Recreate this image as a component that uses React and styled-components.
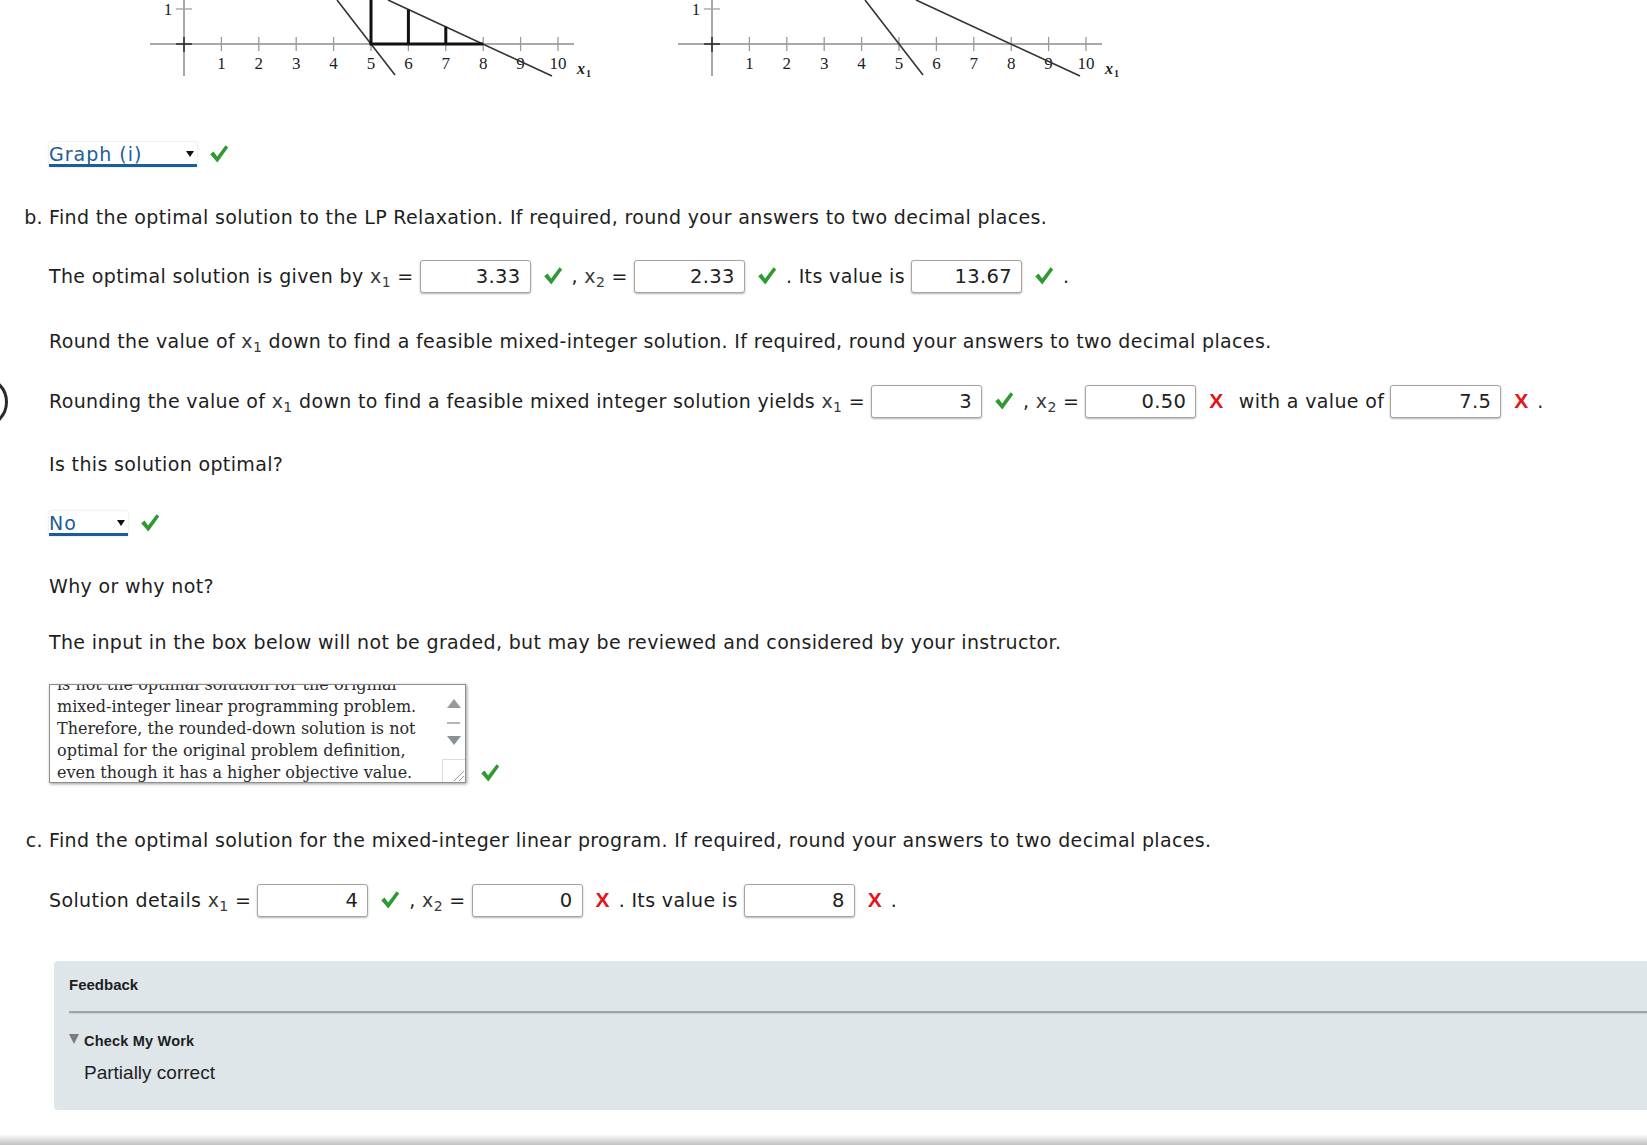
import React from "react";
import styled, { createGlobalStyle } from "styled-components";

const GlobalStyle = createGlobalStyle`
  html, body { margin: 0; padding: 0; background: #fff; overflow: hidden; }
  body {
    font-family: "DejaVu Sans", Verdana, sans-serif;
    font-size: 19px;
    letter-spacing: 0.35px;
    color: #1e1e1e;
  }
`;

const Page = styled.div`
  position: relative;
  width: 1647px;
  height: 1145px;
  overflow: hidden;
`;

const GraphStrip = styled.div`
  display: flex;
  gap: 68px;
  padding-left: 140px;
  height: 90px;
`;

const GraphSvg = styled.svg`
  display: block;
  width: 460px;
  height: 90px;
  letter-spacing: 0;
  font-family: "Liberation Serif", "Times New Roman", serif;
`;

const Row = styled.div`
  position: relative;
  display: flex;
  align-items: center;
  height: 34px;
  white-space: nowrap;
  padding-left: ${(p) => (p.$indent ?? 49)}px;
  margin-top: ${(p) => p.$mt}px;
`;

const QLabel = styled.span`
  box-sizing: border-box;
  display: inline-block;
  width: 49px;
  padding-right: 6px;
  text-align: right;
`;

const Field = styled.span`
  display: inline-flex;
  align-items: center;
  justify-content: flex-end;
  box-sizing: border-box;
  width: 111px;
  height: 33px;
  margin-left: 6px;
  padding-right: 9px;
  background: #fff;
  border: 1px solid #a5a5a5;
  border-radius: 3px;
  box-shadow: 0 1px 2px rgba(0, 0, 0, 0.3);
  font-size: 19.5px;
  color: #222;
`;

const CheckSvg = styled.svg`
  flex-shrink: 0;
  width: 20px;
  height: 20px;
  margin: 0 9px 0 12px;
`;

const Cross = styled.span`
  font-family: "Liberation Sans", Arial, sans-serif;
  font-weight: bold;
  font-size: 21px;
  color: #e5141c;
  letter-spacing: 0;
  margin: 0 9px 0 13px;
`;

const Var = styled.span`
  color: #3a3a3a;
  & > sub {
    font-size: 14px;
    vertical-align: -4px;
    line-height: 0;
  }
`;

const Select = styled.span`
  display: inline-flex;
  align-items: center;
  justify-content: space-between;
  box-sizing: border-box;
  width: ${(p) => p.$w}px;
  height: 25px;
  line-height: 19px;
  padding: 3px 3px 0 0;
  color: #1d5c9c;
  letter-spacing: 1px;
  background: #fff;
  border-bottom: 3px solid #1d5c9c;
  border-radius: 2px 2px 0 0;
  box-shadow: 0 0 2px rgba(0, 0, 0, 0.22);
`;

const Arrow = styled.span`
  width: 0;
  height: 0;
  border-left: 4.5px solid transparent;
  border-right: 4.5px solid transparent;
  border-top: 6px solid #111;
`;

const Ring = styled.span`
  position: absolute;
  left: -44px;
  top: 50%;
  margin-top: -25px;
  box-sizing: border-box;
  width: 52px;
  height: 52px;
  border: 3px solid #2a2a2a;
  border-radius: 50%;
`;

const TextRow = styled.div`
  display: flex;
  align-items: flex-end;
  padding-left: 49px;
  margin-top: 25px;
`;

const TextBox = styled.div`
  display: flex;
  box-sizing: border-box;
  width: 417px;
  height: 99px;
  border: 1px solid #8d8d8d;
  box-shadow: 1px 1px 3px rgba(0, 0, 0, 0.4);
  background: #fff;
  overflow: hidden;
`;

const TextContent = styled.div`
  flex: 1;
  padding-left: 7px;
  overflow: hidden;
  font-family: "DejaVu Serif", "Liberation Serif", serif;
  font-size: 16px;
  line-height: 22px;
  letter-spacing: 0;
  color: #2a2a2a;
`;

const TextLine = styled.div`
  white-space: nowrap;
  &:first-child {
    margin-top: -11px;
  }
`;

const ScrollBar = styled.div`
  width: 23px;
  flex-shrink: 0;
  display: flex;
  flex-direction: column;
  align-items: center;
  padding-top: 14px;
`;

const TriUp = styled.span`
  width: 0;
  height: 0;
  border-left: 7px solid transparent;
  border-right: 7px solid transparent;
  border-bottom: 9px solid #9a9a9a;
`;

const TriDown = styled.span`
  width: 0;
  height: 0;
  margin-top: 12px;
  border-left: 7px solid transparent;
  border-right: 7px solid transparent;
  border-top: 9px solid #8b8f96;
`;

const Dash = styled.span`
  width: 13px;
  height: 2px;
  margin-top: 14px;
  background: #b4b4b4;
`;

const Resizer = styled.div`
  margin-top: auto;
  box-sizing: border-box;
  width: 23px;
  height: 23px;
  border-left: 1px solid #dcdcdc;
  border-top: 1px solid #dcdcdc;
  display: flex;
  align-items: flex-end;
  justify-content: flex-end;
`;

const TextCheck = styled.span`
  display: flex;
  margin-left: 2px;
`;

const FeedbackBox = styled.div`
  margin: 44px -30px 0 54px;
  padding: 14px 0 25px 15px;
  background: #dfe6ea;
  border-radius: 4px 0 0 4px;
  font-family: "Liberation Sans", Arial, sans-serif;
  letter-spacing: 0;
  color: #1e1e1e;
`;

const FeedbackTitle = styled.div`
  font-size: 15px;
  font-weight: bold;
  line-height: 20px;
`;

const Divider = styled.div`
  margin-top: 16px;
  height: 2px;
  background: #9ea6aa;
  border-bottom: 1px solid #cdd4d7;
`;

const Toggle = styled.div`
  display: flex;
  align-items: center;
  gap: 5px;
  margin-top: 17px;
  font-size: 14.5px;
  font-weight: bold;
  letter-spacing: 0.2px;
  line-height: 20px;
`;

const ToggleTri = styled.span`
  width: 0;
  height: 0;
  margin-top: -4px;
  border-left: 5px solid transparent;
  border-right: 5px solid transparent;
  border-top: 10px solid #7c7c7c;
`;

const Status = styled.div`
  margin-top: 10px;
  padding-left: 15px;
  font-size: 19px;
  line-height: 24px;
`;

const BottomBar = styled.div`
  margin-top: 24px;
  height: 12px;
  background: linear-gradient(to bottom, #ffffff, #bcbcbc);
`;

const U = 37.4;

function Graph({ bold }) {
  const ticks = Array.from({ length: 10 }, (_, i) => i + 1);
  const xAt = (k) => 44 + U * k;
  return (
    <GraphSvg viewBox="0 0 460 90">
      <line x1="10" y1="44" x2="434" y2="44" stroke="#8c8c8c" strokeWidth="1.5" />
      <line x1="44" y1="0" x2="44" y2="76" stroke="#8c8c8c" strokeWidth="1.5" />
      <line x1="36" y1="44" x2="52" y2="44" stroke="#333" strokeWidth="1.6" />
      <line x1="44" y1="37" x2="44" y2="52" stroke="#333" strokeWidth="1.6" />
      <line x1="36" y1="9" x2="52" y2="9" stroke="#a0a0a0" strokeWidth="1.3" />
      <text x="28" y="15" fontSize="17" textAnchor="middle" fill="#222">1</text>
      {ticks.map((k) => (
        <g key={k}>
          <line x1={xAt(k)} y1="37" x2={xAt(k)} y2="51" stroke="#9a9a9a" strokeWidth="1.3" />
          <text x={xAt(k)} y="69" fontSize="17" textAnchor="middle" fill="#222">
            {k}
          </text>
        </g>
      ))}
      <text x="437" y="74" fontSize="16" fontStyle="italic" fontWeight="bold" fill="#222">x</text>
      <text x="446" y="77" fontSize="10" fontWeight="bold" fill="#222">1</text>
      <line x1="197" y1="0" x2="255" y2="75" stroke="#333" strokeWidth="1.6" />
      <line x1="248" y1="0" x2="412" y2="76" stroke="#333" strokeWidth="1.6" />
      {bold && (
        <g stroke="#111" strokeWidth="3" fill="none">
          <line x1={xAt(5)} y1="0" x2={xAt(5)} y2="44" />
          <line x1={xAt(6)} y1="9.4" x2={xAt(6)} y2="44" />
          <line x1={xAt(7)} y1="26.7" x2={xAt(7)} y2="44" />
          <line x1={xAt(5) - 1.5} y1="44" x2={xAt(8)} y2="44" />
        </g>
      )}
    </GraphSvg>
  );
}

function Check() {
  return (
    <CheckSvg viewBox="0 0 20 20">
      <path d="M1.2 10.2 L4.6 7.6 L8.1 12.4 L16.6 1.2 L19.2 3.4 L8.3 18.4 Z" fill="#2f9a32" />
    </CheckSvg>
  );
}

const X = ({ n }) => (
  <Var>
    x<sub>{n}</sub>
  </Var>
);

export default function App() {
  return (
    <Page>
      <GlobalStyle />
      <GraphStrip>
        <Graph bold />
        <Graph />
      </GraphStrip>

      <Row $mt={47}>
        <Select $w={148}>
          Graph (i)
          <Arrow />
        </Select>
        <Check />
      </Row>

      <Row $mt={29} $indent={0}>
        <QLabel>b.</QLabel>
        Find the optimal solution to the LP Relaxation. If required, round your answers to two decimal places.
      </Row>

      <Row $mt={25}>
        The optimal solution is given by&nbsp;<X n={1} />&nbsp;=
        <Field>3.33</Field>
        <Check />
        ,&nbsp;<X n={2} />&nbsp;=
        <Field>2.33</Field>
        <Check />
        . Its value is
        <Field>13.67</Field>
        <Check />
        .
      </Row>

      <Row $mt={31}>
        Round the value of&nbsp;<X n={1} />&nbsp;down to find a feasible mixed-integer solution. If required, round your answers to two decimal places.
      </Row>

      <Row $mt={26}>
        <Ring />
        Rounding the value of&nbsp;<X n={1} />&nbsp;down to find a feasible mixed integer solution yields&nbsp;
        <X n={1} />&nbsp;=
        <Field>3</Field>
        <Check />
        ,&nbsp;<X n={2} />&nbsp;=
        <Field>0.50</Field>
        <Cross>X</Cross>
        &nbsp;with a value of
        <Field>7.5</Field>
        <Cross>X</Cross>
        .
      </Row>

      <Row $mt={29}>Is this solution optimal?</Row>

      <Row $mt={25}>
        <Select $w={79}>
          No
          <Arrow />
        </Select>
        <Check />
      </Row>

      <Row $mt={29}>Why or why not?</Row>

      <Row $mt={22}>
        The input in the box below will not be graded, but may be reviewed and considered by your instructor.
      </Row>

      <TextRow>
        <TextBox>
          <TextContent>
            <TextLine>is not the optimal solution for the original</TextLine>
            <TextLine>mixed-integer linear programming problem.</TextLine>
            <TextLine>Therefore, the rounded-down solution is not</TextLine>
            <TextLine>optimal for the original problem definition,</TextLine>
            <TextLine>even though it has a higher objective value.</TextLine>
          </TextContent>
          <ScrollBar>
            <TriUp />
            <Dash />
            <TriDown />
            <Resizer>
              <svg width="14" height="14" viewBox="0 0 14 14">
                <line x1="3" y1="13" x2="13" y2="3" stroke="#9a9a9a" strokeWidth="1" />
                <line x1="8" y1="13" x2="13" y2="8" stroke="#9a9a9a" strokeWidth="1" />
              </svg>
            </Resizer>
          </ScrollBar>
        </TextBox>
        <TextCheck>
          <Check />
        </TextCheck>
      </TextRow>

      <Row $mt={40} $indent={0}>
        <QLabel>c.</QLabel>
        Find the optimal solution for the mixed-integer linear program. If required, round your answers to two decimal places.
      </Row>

      <Row $mt={26}>
        Solution details&nbsp;<X n={1} />&nbsp;=
        <Field>4</Field>
        <Check />
        ,&nbsp;<X n={2} />&nbsp;=
        <Field>0</Field>
        <Cross>X</Cross>
        . Its value is
        <Field>8</Field>
        <Cross>X</Cross>
        .
      </Row>

      <FeedbackBox>
        <FeedbackTitle>Feedback</FeedbackTitle>
        <Divider />
        <Toggle>
          <ToggleTri />
          Check My Work
        </Toggle>
        <Status>Partially correct</Status>
      </FeedbackBox>
      <BottomBar />
    </Page>
  );
}
